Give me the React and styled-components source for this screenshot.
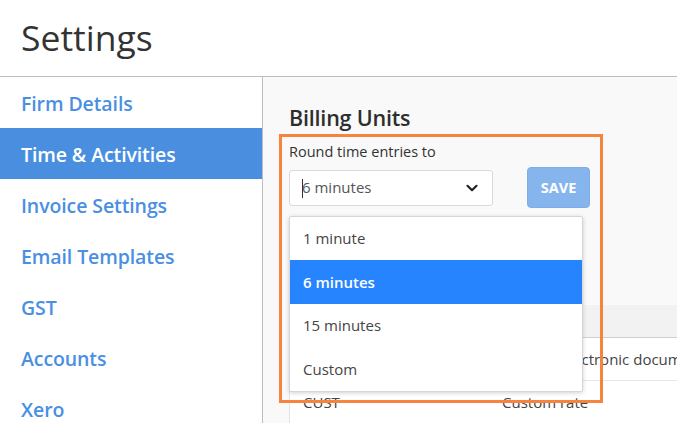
import React from "react";
import styled, { createGlobalStyle } from "styled-components";

const GlobalStyle = createGlobalStyle`
  html, body {
    margin: 0;
    padding: 0;
    background: #ffffff;
  }
  body {
    font-family: "Open Sans", "Noto Sans", "Liberation Sans", sans-serif;
    color: #333;
    overflow: hidden;
  }
`;

const Page = styled.div`
  width: 677px;
  height: 423px;
  overflow: hidden;
  position: relative;
`;

const Header = styled.header`
  height: 77px;
  border-bottom: 1px solid #bdbdbd;
  box-sizing: border-box;
  padding: 0 21px;
  display: flex;
  align-items: center;
`;

const Title = styled.h1`
  margin: 0;
  font-size: 35.5px;
  font-weight: 500;
  color: #333;
  letter-spacing: 0;
  padding-bottom: 2px;
`;

const Body = styled.div`
  display: flex;
  height: calc(423px - 77px);
`;

const Sidebar = styled.nav`
  width: 263px;
  flex-shrink: 0;
  border-right: 1px solid #bdbdbd;
  box-sizing: border-box;
  background: #fff;
`;

const NavItem = styled.div`
  height: 51px;
  display: flex;
  align-items: center;
  padding-left: 21px;
  padding-top: 1px;
  box-sizing: border-box;
  font-size: 19.5px;
  font-weight: 600;
  letter-spacing: -0.1px;
  color: ${p => (p.active ? "#fff" : "#4a8fe2")};
  background: ${p => (p.active ? "#4a8fdf" : "transparent")};
`;

const Main = styled.main`
  flex: 1;
  background: #f9f9f9;
  padding: 26px 0 0 26px;
  position: relative;
`;

const SectionTitle = styled.h2`
  margin: 0 0 10px 0;
  font-size: 21.5px;
  line-height: 29px;
  font-weight: 600;
  color: #2e2e2e;
  letter-spacing: -0.2px;
`;

const Label = styled.div`
  font-size: 14.5px;
  line-height: 20px;
  font-weight: 500;
  color: #333;
  margin: 0 0 5px 0;
`;

const Row = styled.div`
  display: flex;
  align-items: center;
  gap: 34px;
`;

const SelectWrap = styled.div`
  position: relative;
`;

const SelectBox = styled.div`
  width: 204px;
  height: 36px;
  box-sizing: border-box;
  background: #fff;
  border: 1px solid #dadada;
  border-radius: 3px;
  display: flex;
  align-items: center;
  justify-content: space-between;
  padding: 0 13px 0 12px;
  font-size: 15px;
  color: #555;
`;

const Caret = styled.span`
  display: inline-block;
  width: 1px;
  height: 19px;
  background: #333;
  vertical-align: middle;
  margin-right: -1px;
`;

const SaveButton = styled.button`
  width: 63px;
  height: 41px;
  border: 1px solid #7eaeea;
  border-radius: 4px;
  background: #86b5ee;
  color: #fff;
  font-family: inherit;
  font-size: 14.5px;
  font-weight: 700;
  padding: 0;
`;

const Menu = styled.div`
  position: absolute;
  top: 46px;
  left: 0;
  width: 292px;
  background: #fff;
  border: 1px solid #d6d6d6;
  border-radius: 2px;
  box-shadow: 0 1px 4px rgba(0, 0, 0, 0.18);
  z-index: 5;
`;

const Option = styled.div`
  height: 43.5px;
  display: flex;
  align-items: center;
  padding-left: 13px;
  font-size: 15px;
  font-weight: ${p => (p.selected ? 600 : 400)};
  color: ${p => (p.selected ? "#fff" : "#444")};
  background: ${p => (p.selected ? "#2684ff" : "transparent")};
`;

const Table = styled.div`
  margin-top: 97px;
  border-left: 1px solid #e4e4e4;
  background: #fff;
`;

const TableHead = styled.div`
  height: 32px;
  background: #f2f2f2;
  border-bottom: 1px solid #cfcfcf;
`;

const TableRow = styled.div`
  height: 42px;
  display: grid;
  grid-template-columns: 199px 1fr;
  align-items: center;
  padding-left: 13px;
  border-bottom: 1px solid #e6e6e6;
  font-size: 15px;
  color: #444;
  white-space: nowrap;
  overflow: hidden;
`;

const Highlight = styled.div`
  position: absolute;
  left: 279px;
  top: 134px;
  width: 324px;
  height: 269px;
  box-sizing: border-box;
  border: 3px solid #f6833e;
  z-index: 10;
  pointer-events: none;
`;

const Chevron = () => (
  <svg width="14" height="14" viewBox="0 0 14 14" fill="none">
    <path d="M2.5 4.8 L7 9.2 L11.5 4.8" stroke="#222" strokeWidth="2.2" strokeLinecap="round" strokeLinejoin="round" />
  </svg>
);

const navItems = [
  "Firm Details",
  "Time & Activities",
  "Invoice Settings",
  "Email Templates",
  "GST",
  "Accounts",
  "Xero"
];

const options = ["1 minute", "6 minutes", "15 minutes", "Custom"];

const App = () => (
  <>
    <GlobalStyle />
    <Page>
      <Header>
        <Title>Settings</Title>
      </Header>
      <Body>
        <Sidebar>
          {navItems.map(item => (
            <NavItem key={item} active={item === "Time & Activities"}>
              {item}
            </NavItem>
          ))}
        </Sidebar>
        <Main>
          <SectionTitle>Billing Units</SectionTitle>
          <Label>Round time entries to</Label>
          <Row>
            <SelectWrap>
              <SelectBox>
                <span>
                  <Caret />6 minutes
                </span>
                <Chevron />
              </SelectBox>
              <Menu>
                {options.map(opt => (
                  <Option key={opt} selected={opt === "6 minutes"}>
                    {opt}
                  </Option>
                ))}
              </Menu>
            </SelectWrap>
            <SaveButton>SAVE</SaveButton>
          </Row>
          <Table>
            <TableHead />
            <TableRow>
              <span />
              <span>Scans &amp; electronic documents</span>
            </TableRow>
            <TableRow>
              <span>CUST</span>
              <span>Custom rate</span>
            </TableRow>
          </Table>
        </Main>
      </Body>
      <Highlight />
    </Page>
  </>
);

export default App;
